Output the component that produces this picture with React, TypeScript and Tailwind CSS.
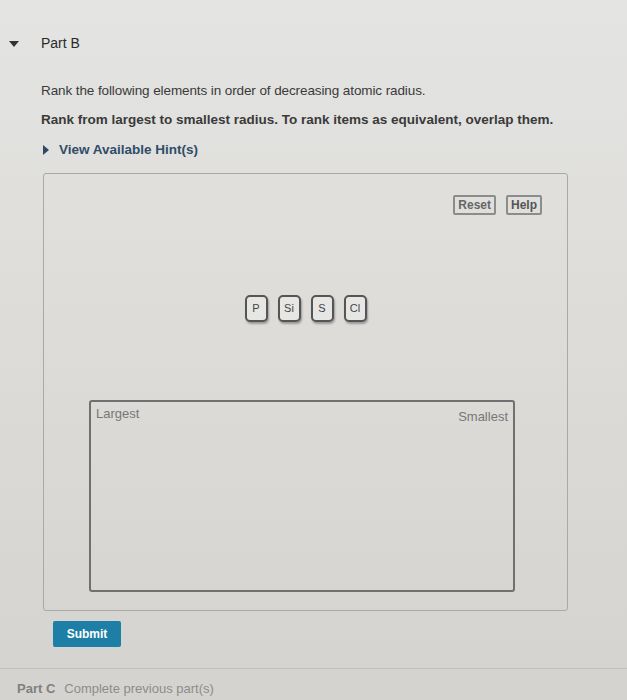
import React from "react";

const elements = ["P", "Si", "S", "Cl"];

function Tile({ label }: { label: string }) {
  return (
    <div className="flex h-[27px] w-[23px] items-center justify-center rounded-[5px] border-2 border-[#555] bg-[#e6e6e4] text-[11px] text-[#444] shadow-[1px_2px_2px_rgba(0,0,0,0.3)]">
      {label}
    </div>
  );
}

export default function App() {
  return (
    <div
      className="relative h-[700px] w-[627px] overflow-hidden bg-gradient-to-b from-[#e4e4e2] to-[#d5d3cf] text-[#333]"
      style={{ fontFamily: '"Liberation Sans", Arial, sans-serif' }}
    >
      {/* Part B header */}
      <div className="flex items-center pt-[33px]">
        <span className="ml-[9px] h-0 w-0 border-x-[5px] border-t-[6px] border-x-transparent border-t-[#333]" />
        <span className="ml-[22px] text-[14px] text-[#2a2a2a]">Part B</span>
      </div>

      <div className="ml-[41px] mt-[27px]">
        <p className="text-[13.5px] tracking-[-0.1px] text-[#3a3a3a]">
          Rank the following elements in order of decreasing atomic radius.
        </p>
        <p className="mt-[9px] text-[13.5px] font-bold text-[#3a3a3a]">
          Rank from largest to smallest radius. To rank items as equivalent, overlap them.
        </p>
        <div className="mt-[9px] flex items-center">
          <span className="ml-[2px] h-0 w-0 border-y-[5px] border-l-[6px] border-y-transparent border-l-[#2c4a66]" />
          <span className="ml-[10px] text-[13.5px] font-bold text-[#2f4d68]">View Available Hint(s)</span>
        </div>
      </div>

      {/* Ranking widget */}
      <div className="ml-[43px] mt-[13px] h-[438px] w-[525px] rounded-[3px] border border-[#a9a9a7] px-[45px] pt-[21px]">
        <div className="flex justify-end gap-[10px]">
          <button className="rounded-[2px] border-2 border-[#8c8c8a] px-[3px] text-[12px] font-bold leading-[16px] text-[#666]">
            Reset
          </button>
          <button className="mr-[-20px] rounded-[2px] border-2 border-[#8c8c8a] px-[3px] text-[12px] font-bold leading-[16px] text-[#555]">
            Help
          </button>
        </div>

        <div className="mt-[80px] flex justify-center gap-[10px]">
          {elements.map((e) => (
            <Tile key={e} label={e} />
          ))}
        </div>

        <div className="mt-[78px] flex h-[192px] w-[426px] justify-between rounded-[3px] border-2 border-[#707070] px-[5px] pt-[2px] text-[13px] text-[#777]">
          <span>Largest</span>
          <span className="pt-[3px]">Smallest</span>
        </div>
      </div>

      <button className="ml-[53px] mt-[10px] h-[26px] w-[68px] rounded-[2px] bg-[#1d7fa6] text-[12px] font-bold text-white">
        Submit
      </button>

      <div className="mt-[21px] border-t border-[#c2c0bc]" />

      <div className="ml-[17px] mt-[10px] flex items-baseline text-[13px]">
        <span className="font-bold text-[#808080]">Part C</span>
        <span className="ml-[9px] text-[#8c8c8c]">Complete previous part(s)</span>
      </div>
    </div>
  );
}
